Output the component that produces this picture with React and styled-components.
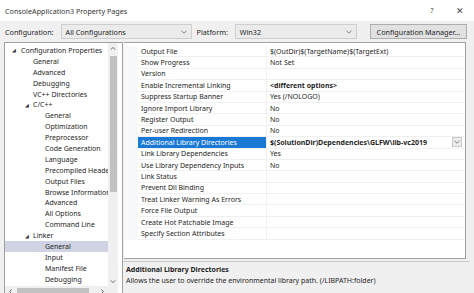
import React from "react";
import styled, { createGlobalStyle } from "styled-components";

const Global = createGlobalStyle`
  html, body { margin: 0; padding: 0; background: #f0f0f0; }
  body { font-family: "Noto Sans", "Liberation Sans", sans-serif; font-size: 7px; color: #1e1e1e; }
  * { box-sizing: border-box; }
`;

const Window = styled.div`
  width: 474px;
  height: 293px;
  display: flex;
  flex-direction: column;
  overflow: hidden;
  background: #f0f0f0;
`;

const TitleBar = styled.div`
  height: 21px;
  flex: none;
  background: #fff;
  display: flex;
  align-items: center;
  padding-left: 5px;
  color: #333;
  font-size: 7.2px;
`;
const TitleText = styled.div` flex: 1; `;
const TitleBtn = styled.div`
  width: 28px;
  text-align: center;
  font-size: ${(p) => p.$size || 8}px;
  color: #444;
`;

const Toolbar = styled.div`
  height: 21px;
  flex: none;
  display: flex;
  align-items: center;
  padding: 0 7px 0 5px;
  font-size: 7.2px;
`;
const Label = styled.span` margin-right: ${(p) => p.$mr}px; `;
const Select = styled.div`
  width: ${(p) => p.$w}px;
  height: 15px;
  border: 1px solid #cfcfcf;
  background: #ebebeb;
  display: flex;
  align-items: center;
  padding: 0 4px;
  margin-right: ${(p) => p.$mr}px;
  & > span { flex: 1; }
`;
const Chevron = () => (
  <svg width="6" height="4" viewBox="0 0 6 4">
    <path d="M0.5 0.8 L3 3.2 L5.5 0.8" fill="none" stroke="#666" strokeWidth="0.8" />
  </svg>
);
const Button = styled.div`
  height: 15px;
  flex: 1;
  border: 1px solid #adadad;
  background: #e1e1e1;
  display: flex;
  align-items: center;
  justify-content: center;
`;

const Main = styled.div`
  height: 255px;
  flex: none;
  display: flex;
  padding: 0 4px;
`;

const Tree = styled.div`
  width: 119px;
  border: 1px solid #a0a0a0;
  background: #fff;
  padding-right: 4px;
  display: grid;
  grid-template-columns: 1fr 10px;
  grid-template-rows: 1fr 10px;
  min-height: 0;
`;
const TreeList = styled.div`
  padding-top: 2px;
  overflow: hidden;
`;
const TreeItem = styled.div`
  height: 10.9px;
  display: flex;
  align-items: center;
  padding-left: ${(p) => p.$indent}px;
  background: ${(p) => (p.$sel ? "#cfd3e3" : "transparent")};
  white-space: nowrap;
`;
const Expander = styled.span`
  width: ${(p) => p.$w}px;
  font-size: 5px;
  color: #333;
`;
const VScroll = styled.div`
  background: #f0f0f0;
  display: flex;
  flex-direction: column;
  align-items: center;
`;
const Arrow = styled.div`
  height: 10px;
  width: ${(p) => p.$w || "100%"};
  display: flex;
  align-items: center;
  justify-content: center;
`;
const Thumb = styled.div`
  width: ${(p) => p.$w || "7px"};
  height: ${(p) => p.$h || "100%"};
  background: #c2c2c2;
`;
const VTrack = styled.div`
  flex: 1;
  display: flex;
  flex-direction: column;
  align-items: center;
  padding-top: 3px;
`;
const HScroll = styled.div`
  background: #f0f0f0;
  display: flex;
  align-items: center;
`;
const Spacer = styled.div` flex: 1; `;
const Corner = styled.div` background: #f0f0f0; `;

const Right = styled.div`
  flex: 1;
  height: 251px;
  display: flex;
  flex-direction: column;
  min-width: 0;
`;
const Grid = styled.div`
  flex: 1;
  background: #fff;
  border: 1px solid #a0a0a0;
  border-left: none;
  margin-right: 4px;
  padding-top: 3px;
  margin-left: 1px;
`;
const Row = styled.div`
  height: 11.4px;
  display: grid;
  grid-template-columns: 14px 129px 1fr;
`;
const Gutter = styled.div` background: #f7f8fa; `;
const Cell = styled.div`
  display: flex;
  align-items: center;
  padding-left: 3px;
  white-space: nowrap;
  overflow: hidden;
  border-bottom: 1px solid #f0f0f0;
  border-right: ${(p) => (p.$name ? "1px solid #f0f0f0" : "none")};
  background: ${(p) => (p.$sel && p.$name ? "#1979d4" : "transparent")};
  color: ${(p) => (p.$sel && p.$name ? "#fff" : "#1e1e1e")};
  font-weight: ${(p) => (p.$bold ? 700 : 400)};
  & > span { flex: 1; overflow: hidden; }
`;
const DropBtn = styled.div`
  width: 10px;
  height: 10px;
  border: 1px solid #c8c8c8;
  background: #ececec;
  display: flex;
  align-items: center;
  justify-content: center;
  margin-right: 3px;
`;
const Desc = styled.div`
  height: 32px;
  flex: none;
  border-top: 1px solid #c8c8c8;
  margin-top: 2px;
  padding: 2px 3px 0 3px;
  background: #f0f0f0;
  line-height: 11px;
`;
const DescTitle = styled.div` font-weight: 700; `;

const tree = [
  { t: "Configuration Properties", i: 7, exp: 9 },
  { t: "General", i: 28 },
  { t: "Advanced", i: 28 },
  { t: "Debugging", i: 28 },
  { t: "VC++ Directories", i: 28 },
  { t: "C/C++", i: 20, exp: 8 },
  { t: "General", i: 40 },
  { t: "Optimization", i: 40 },
  { t: "Preprocessor", i: 40 },
  { t: "Code Generation", i: 40 },
  { t: "Language", i: 40 },
  { t: "Precompiled Headers", i: 40 },
  { t: "Output Files", i: 40 },
  { t: "Browse Information", i: 40 },
  { t: "Advanced", i: 40 },
  { t: "All Options", i: 40 },
  { t: "Command Line", i: 40 },
  { t: "Linker", i: 20, exp: 8 },
  { t: "General", i: 40, sel: true },
  { t: "Input", i: 40 },
  { t: "Manifest File", i: 40 },
  { t: "Debugging", i: 40 },
];

const props = [
  ["Output File", "$(OutDir)$(TargetName)$(TargetExt)"],
  ["Show Progress", "Not Set"],
  ["Version", ""],
  ["Enable Incremental Linking", "<different options>", true],
  ["Suppress Startup Banner", "Yes (/NOLOGO)"],
  ["Ignore Import Library", "No"],
  ["Register Output", "No"],
  ["Per-user Redirection", "No"],
  ["Additional Library Directories", "$(SolutionDir)Dependencies\\GLFW\\lib-vc2019", true, true],
  ["Link Library Dependencies", "Yes"],
  ["Use Library Dependency Inputs", "No"],
  ["Link Status", ""],
  ["Prevent Dll Binding", ""],
  ["Treat Linker Warning As Errors", ""],
  ["Force File Output", ""],
  ["Create Hot Patchable Image", ""],
  ["Specify Section Attributes", ""],
];

const SmallArrow = ({ d }) => (
  <svg width="6" height="5" viewBox="0 0 6 5">
    <path d={d} fill="none" stroke="#555" strokeWidth="0.9" />
  </svg>
);

export default function App() {
  return (
    <>
      <Global />
      <Window>
        <TitleBar>
          <TitleText>ConsoleApplication3 Property Pages</TitleText>
          <TitleBtn $size={7}>?</TitleBtn>
          <TitleBtn $size={9}>✕</TitleBtn>
        </TitleBar>
        <Toolbar>
          <Label $mr={7}>Configuration:</Label>
          <Select $w={131} $mr={5}>
            <span>All Configurations</span>
            <Chevron />
          </Select>
          <Label $mr={7}>Platform:</Label>
          <Select $w={122} $mr={13}>
            <span>Win32</span>
            <Chevron />
          </Select>
          <Button>Configuration Manager...</Button>
        </Toolbar>
        <Main>
          <Tree>
            <TreeList>
              {tree.map((n, k) => (
                <TreeItem key={k} $indent={n.i} $sel={n.sel}>
                  {n.exp && <Expander $w={n.exp}>◢</Expander>}
                  {n.t}
                </TreeItem>
              ))}
            </TreeList>
            <VScroll>
              <Arrow><SmallArrow d="M0.8 3.6 L3 1.4 L5.2 3.6" /></Arrow>
              <VTrack><Thumb $h="136px" /></VTrack>
              <Arrow><SmallArrow d="M0.8 1.4 L3 3.6 L5.2 1.4" /></Arrow>
            </VScroll>
            <HScroll>
              <Arrow $w="12px"><SmallArrow d="M3.6 0.4 L1.6 2.5 L3.6 4.6" /></Arrow>
              <Thumb $w="72px" $h="6px" />
              <Spacer />
              <Arrow $w="12px"><SmallArrow d="M2.4 0.4 L4.4 2.5 L2.4 4.6" /></Arrow>
            </HScroll>
            <Corner />
          </Tree>
          <Right>
            <Grid>
              {props.map(([n, v, bold, sel], k) => (
                <Row key={k}>
                  <Gutter />
                  <Cell $name $sel={sel}>{n}</Cell>
                  <Cell $bold={bold} $sel={sel}>
                    <span>{v}</span>
                    {sel && (
                      <DropBtn><Chevron /></DropBtn>
                    )}
                  </Cell>
                </Row>
              ))}
            </Grid>
            <Desc>
              <DescTitle>Additional Library Directories</DescTitle>
              <div>Allows the user to override the environmental library path. (/LIBPATH:folder)</div>
            </Desc>
          </Right>
        </Main>
      </Window>
    </>
  );
}
